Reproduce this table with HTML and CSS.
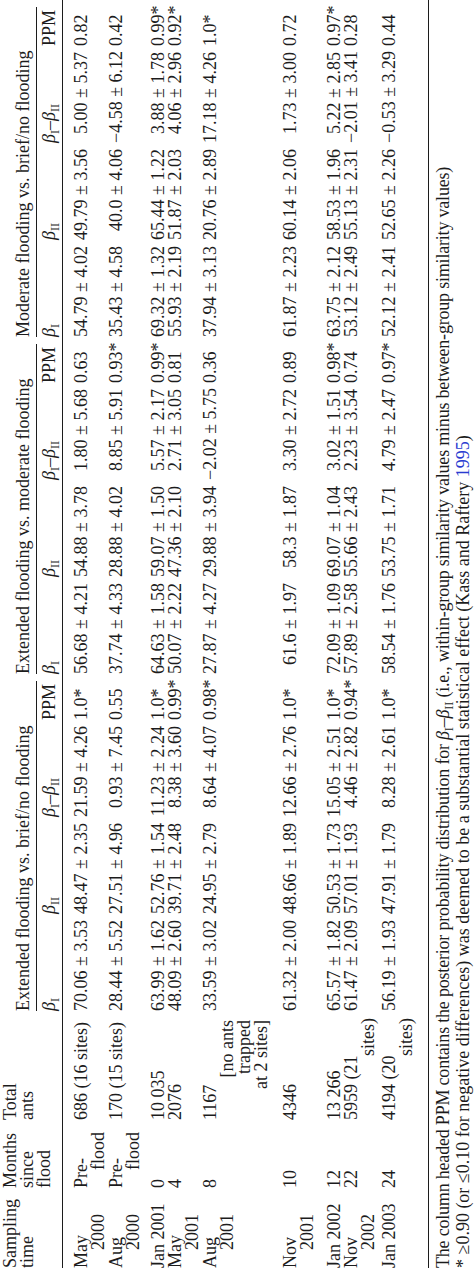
FILE: index.html
```html
<!DOCTYPE html>
<html lang="en">
<head>
<meta charset="utf-8">
<title>Table</title>
<link rel="stylesheet" href="styles.css">
</head>
<body>
<div class="page">
  <div class="sheet">
    <table class="data">
      <colgroup>
        <col class="c-time"><col class="c-months"><col class="c-ants">
        <col class="c-val"><col class="c-val"><col class="c-val"><col class="c-ppm">
        <col class="c-val"><col class="c-val"><col class="c-val"><col class="c-ppm">
        <col class="c-val"><col class="c-val"><col class="c-val"><col class="c-ppm">
      </colgroup>
      <thead>
        <tr class="head-a">
          <th rowspan="2" class="stub">Sampling<br>time</th>
          <th rowspan="2" class="stub">Months<br>since<br>flood</th>
          <th rowspan="2" class="stub">Total<br>ants</th>
          <th colspan="4" class="group"><div class="group-title">Extended flooding vs. brief/no flooding</div></th>
          <th colspan="4" class="group"><div class="group-title">Extended flooding vs. moderate flooding</div></th>
          <th colspan="4" class="group"><div class="group-title">Moderate flooding vs. brief/no flooding</div></th>
        </tr>
        <tr class="head-b">
          <th><i>β</i><sub>I</sub></th><th><i>β</i><sub>II</sub></th><th><i>β</i><sub>I</sub>–<i>β</i><sub>II</sub></th><th>PPM</th>
          <th><i>β</i><sub>I</sub></th><th><i>β</i><sub>II</sub></th><th><i>β</i><sub>I</sub>–<i>β</i><sub>II</sub></th><th>PPM</th>
          <th><i>β</i><sub>I</sub></th><th><i>β</i><sub>II</sub></th><th><i>β</i><sub>I</sub>–<i>β</i><sub>II</sub></th><th>PPM</th>
        </tr>
      </thead>
      <tbody>
        <tr class="sp10">
          <td class="hang">May<br>2000</td><td class="hang">Pre-<br>flood</td><td class="hang">686 (16 sites)</td>
          <td class="v">70.06 ± 3.53</td><td class="v">48.47 ± 2.35</td><td class="v">21.59 ± 4.26</td><td>1.0*</td>
          <td class="v">56.68 ± 4.21</td><td class="v">54.88 ± 3.78</td><td class="v">1.80 ± 5.68</td><td>0.63</td>
          <td class="v">54.79 ± 4.02</td><td class="v">49.79 ± 3.56</td><td class="v">5.00 ± 5.37</td><td>0.82</td>
        </tr>
        <tr class="sp1">
          <td class="hang">Aug<br>2000</td><td class="hang">Pre-<br>flood</td><td class="hang">170 (15 sites)</td>
          <td class="v">28.44 ± 5.52</td><td class="v">27.51 ± 4.96</td><td class="v">0.93 ± 7.45</td><td>0.55</td>
          <td class="v">37.74 ± 4.33</td><td class="v">28.88 ± 4.02</td><td class="v">8.85 ± 5.91</td><td>0.93*</td>
          <td class="v">35.43 ± 4.58</td><td class="v">40.0 ± 4.06</td><td class="v">−4.58 ± 6.12</td><td>0.42</td>
        </tr>
        <tr class="sp8">
          <td class="hang">Jan 2001</td><td class="hang">0</td><td class="hang">10 035</td>
          <td class="v">63.99 ± 1.62</td><td class="v">52.76 ± 1.54</td><td class="v">11.23 ± 2.24</td><td>1.0*</td>
          <td class="v">64.63 ± 1.58</td><td class="v">59.07 ± 1.50</td><td class="v">5.57 ± 2.17</td><td>0.99*</td>
          <td class="v">69.32 ± 1.32</td><td class="v">65.44 ± 1.22</td><td class="v">3.88 ± 1.78</td><td>0.99*</td>
        </tr>
        <tr class="sp0">
          <td class="hang">May<br>2001</td><td class="hang">4</td><td class="hang">2076</td>
          <td class="v">48.09 ± 2.60</td><td class="v">39.71 ± 2.48</td><td class="v">8.38 ± 3.60</td><td>0.99*</td>
          <td class="v">50.07 ± 2.22</td><td class="v">47.36 ± 2.10</td><td class="v">2.71 ± 3.05</td><td>0.81</td>
          <td class="v">55.93 ± 2.19</td><td class="v">51.87 ± 2.03</td><td class="v">4.06 ± 2.96</td><td>0.92*</td>
        </tr>
        <tr class="sp1">
          <td class="hang">Aug<br>2001</td><td class="hang">8</td><td class="hang">1167<br><span class="note-cell">[no ants<br>trapped<br>at 2 sites]</span></td>
          <td class="v">33.59 ± 3.02</td><td class="v">24.95 ± 2.79</td><td class="v">8.64 ± 4.07</td><td>0.98*</td>
          <td class="v">27.87 ± 4.27</td><td class="v">29.88 ± 3.94</td><td class="v">−2.02 ± 5.75</td><td>0.36</td>
          <td class="v">37.94 ± 3.13</td><td class="v">20.76 ± 2.89</td><td class="v">17.18 ± 4.26</td><td>1.0*</td>
        </tr>
        <tr class="sp12">
          <td class="hang">Nov<br>2001</td><td class="hang">10</td><td class="hang">4346</td>
          <td class="v">61.32 ± 2.00</td><td class="v">48.66 ± 1.89</td><td class="v">12.66 ± 2.76</td><td>1.0*</td>
          <td class="v">61.6 ± 1.97</td><td class="v">58.3 ± 1.87</td><td class="v">3.30 ± 2.72</td><td>0.89</td>
          <td class="v">61.87 ± 2.23</td><td class="v">60.14 ± 2.06</td><td class="v">1.73 ± 3.00</td><td>0.72</td>
        </tr>
        <tr class="sp10">
          <td class="hang">Jan 2002</td><td class="hang">12</td><td class="hang">13 266</td>
          <td class="v">65.57 ± 1.82</td><td class="v">50.53 ± 1.73</td><td class="v">15.05 ± 2.51</td><td>1.0*</td>
          <td class="v">72.09 ± 1.09</td><td class="v">69.07 ± 1.04</td><td class="v">3.02 ± 1.51</td><td>0.98*</td>
          <td class="v">63.75 ± 2.12</td><td class="v">58.53 ± 1.96</td><td class="v">5.22 ± 2.85</td><td>0.97*</td>
        </tr>
        <tr class="sp0">
          <td class="hang">Nov<br>2002</td><td class="hang">22</td><td class="hang">5959 (21<br><span class="tail">sites)</span></td>
          <td class="v">61.47 ± 2.09</td><td class="v">57.01 ± 1.93</td><td class="v">4.46 ± 2.82</td><td>0.94*</td>
          <td class="v">57.89 ± 2.58</td><td class="v">55.66 ± 2.43</td><td class="v">2.23 ± 3.54</td><td>0.74</td>
          <td class="v">53.12 ± 2.49</td><td class="v">55.13 ± 2.31</td><td class="v">−2.01 ± 3.41</td><td>0.28</td>
        </tr>
        <tr class="sp4 last">
          <td class="hang">Jan 2003</td><td class="hang">24</td><td class="hang">4194 (20<br><span class="tail">sites)</span></td>
          <td class="v">56.19 ± 1.93</td><td class="v">47.91 ± 1.79</td><td class="v">8.28 ± 2.61</td><td>1.0*</td>
          <td class="v">58.54 ± 1.76</td><td class="v">53.75 ± 1.71</td><td class="v">4.79 ± 2.47</td><td>0.97*</td>
          <td class="v">52.12 ± 2.41</td><td class="v">52.65 ± 2.26</td><td class="v">−0.53 ± 3.29</td><td>0.44</td>
        </tr>
      </tbody>
    </table>
    <div class="notes">
      <p class="note-long">The column headed PPM contains the posterior probability distribution for <i>β</i><sub>I</sub>–<i>β</i><sub>II</sub> (i.e., within-group similarity values minus between-group similarity values)</p>
      <p>* ≥0.90 (or ≤0.10 for negative differences) was deemed to be a substantial statistical effect (Kass and Raftery <span class="ref">1995</span>)</p>
    </div>
  </div>
</div>
</body>
</html>
```

FILE: styles.css
```css
html, body {
  margin: 0;
  padding: 0;
  background: #ffffff;
}

.page {
  width: 474px;
  height: 1268px;
  overflow: hidden;
  position: relative;
}

.sheet {
  width: 1268px;
  height: 474px;
  transform-origin: 0 0;
  transform: translate(0, 1268px) rotate(-90deg);
  font-family: "Liberation Serif", "Times New Roman", serif;
  font-size: 18px;
  line-height: 17px;
  color: #1c1c1c;
}

.data {
  table-layout: fixed;
  width: 1268px;
  border-collapse: collapse;
  border-spacing: 0;
  margin-top: 0;
  border-bottom: 1.6px solid #1c1c1c;
}

.c-time { width: 80px; }
.c-months { width: 68px; }
.c-ants { width: 109px; }
.c-val { width: 97px; }
.c-ppm { width: 46px; }

th, td {
  padding: 0 6px 0 0;
  vertical-align: top;
  text-align: left;
  white-space: nowrap;
  font-weight: normal;
}

thead {
  border-bottom: 1.6px solid #1c1c1c;
}

.head-a th {
  padding-top: 0;
}

.head-a .stub {
  padding-top: 2px;
  padding-bottom: 0;
}

.head-a .group {
  padding: 15px 0 0 0;
}

.group-title {
  margin-right: 7px;
  padding-bottom: 4px;
  border-bottom: 0.8px solid #1c1c1c;
}

.head-b th {
  padding-top: 4px;
  padding-bottom: 4px;
}

sub {
  font-size: 0.68em;
  line-height: 0;
  vertical-align: -0.3em;
}

i {
  font-style: italic;
}

.hang {
  padding-left: 1em;
  text-indent: -1em;
}

.note-cell {
  display: inline-block;
  text-indent: 0;
  text-align: right;
  width: 82px;
}

.tail {
  display: inline-block;
  text-indent: 0;
  text-align: right;
  width: 84px;
}

.v {
  text-align: right;
}

.sp0 td { padding-top: 0; }
.sp1 td { padding-top: 1px; }
.sp4 td { padding-top: 4px; }
.sp8 td { padding-top: 8px; }
.sp10 td { padding-top: 10px; }
.sp12 td { padding-top: 12px; }
.last td { padding-bottom: 13px; }

.notes {
  margin-top: 4px;
}

.notes p {
  margin: 0;
  line-height: 20px;
  white-space: nowrap;
}

.note-long {
  letter-spacing: -0.2px;
}

.ref {
  color: #2a3bd0;
}
```
